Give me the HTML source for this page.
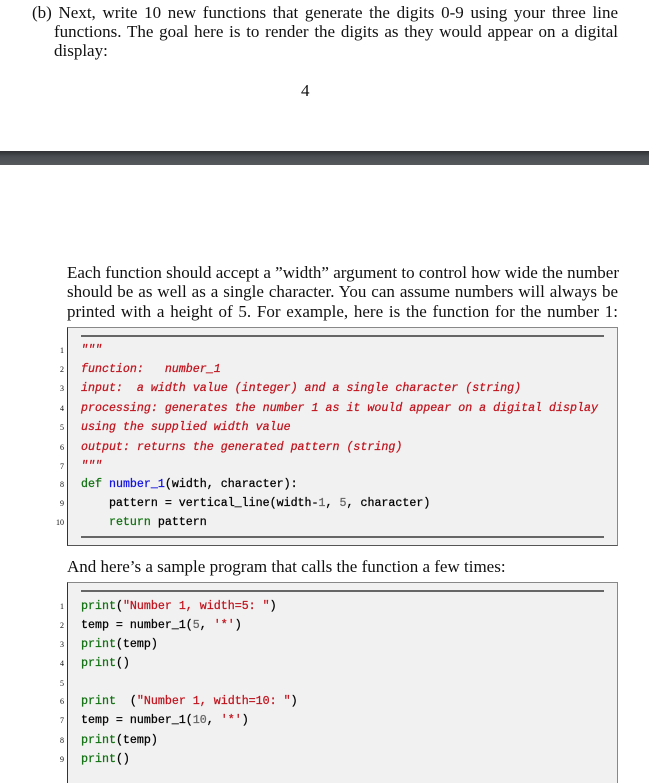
<!DOCTYPE html>
<html><head><meta charset="utf-8"><style>
body{margin:0;width:649px;height:775px;background:#fff;position:relative;overflow:hidden;font-family:"Liberation Serif",serif;color:#111}
.l{position:absolute;font-size:17px;line-height:20px;white-space:nowrap;text-align:justify;text-align-last:justify}
.band{position:absolute;left:0;top:151px;width:649px;height:14px;background:linear-gradient(#2e3033,#4a4e52 40%,#56595c)}
.box{position:absolute;left:67px;width:549px;background:#f1f1f1;border-left:1.5px solid #333;border-top:1px solid #888;border-right:1px solid #888;border-bottom:1.5px solid #555}
.rule{position:absolute;left:81px;width:523px;height:2px;background:#666}
.c{position:absolute;left:81px;font-family:"Liberation Mono",monospace;font-size:11.65px;line-height:14px;white-space:pre;color:#000;-webkit-text-stroke:0.25px currentColor}
.n{position:absolute;left:50px;width:14px;text-align:right;font-size:8px;font-family:"Liberation Serif",serif;line-height:14px}
.cm{color:#c0141e;font-style:italic}
.k{color:#107010}.f{color:#1010e0}.s{color:#c0141e}.g{color:#666}
</style></head><body>
<div class="l" style="left:32px;top:3px;width:586px">(b) Next, write 10 new functions that generate the digits 0-9 using your three line</div>
<div class="l" style="left:54px;top:22px;width:564px">functions. The goal here is to render the digits as they would appear on a digital</div>
<div class="l" style="left:54px;top:41px;text-align-last:left">display:</div>
<div class="l" style="left:301px;top:81px;text-align-last:left">4</div>
<div class="band"></div>
<div class="l" style="left:67px;top:263px;width:551px">Each function should accept a ”width” argument to control how wide the number</div>
<div class="l" style="left:67px;top:282px;width:551px">should be as well as a single character. You can assume numbers will always be</div>
<div class="l" style="left:67px;top:302px;width:551px">printed with a height of 5. For example, here is the function for the number 1:</div>
<div class="box" style="top:327px;height:217px"></div>
<div class="rule" style="top:335px"></div>
<div class="rule" style="top:536px"></div>
<div class="n" style="top:344px">1</div><div class="c cm" style="top:344px">"""</div>
<div class="n" style="top:363px">2</div><div class="c cm" style="top:363px">function:   number_1</div>
<div class="n" style="top:382px">3</div><div class="c cm" style="top:382px">input:  a width value (integer) and a single character (string)</div>
<div class="n" style="top:402px">4</div><div class="c cm" style="top:402px">processing: generates the number 1 as it would appear on a digital display</div>
<div class="n" style="top:421px">5</div><div class="c cm" style="top:421px">using the supplied width value</div>
<div class="n" style="top:441px">6</div><div class="c cm" style="top:441px">output: returns the generated pattern (string)</div>
<div class="n" style="top:460px">7</div><div class="c cm" style="top:460px">"""</div>
<div class="n" style="top:478px">8</div><div class="c" style="top:478px"><span class="k">def</span> <span class="f">number_1</span>(width, character):</div>
<div class="n" style="top:497px">9</div><div class="c" style="top:497px">    pattern = vertical_line(width-<span class="g">1</span>, <span class="g">5</span>, character)</div>
<div class="n" style="top:516px">10</div><div class="c" style="top:516px">    <span class="k">return</span> pattern</div>
<div class="l" style="left:67px;top:557px;text-align-last:left">And here’s a sample program that calls the function a few times:</div>
<div class="box" style="top:582px;height:200px;border-bottom:none"></div>
<div class="rule" style="top:590px"></div>
<div class="n" style="top:600px">1</div><div class="c" style="top:600px"><span class="k">print</span>(<span class="s">"Number 1, width=5: "</span>)</div>
<div class="n" style="top:619px">2</div><div class="c" style="top:619px">temp = number_1(<span class="g">5</span>, <span class="s">'*'</span>)</div>
<div class="n" style="top:638px">3</div><div class="c" style="top:638px"><span class="k">print</span>(temp)</div>
<div class="n" style="top:657px">4</div><div class="c" style="top:657px"><span class="k">print</span>()</div>
<div class="n" style="top:677px">5</div>
<div class="n" style="top:695px">6</div><div class="c" style="top:695px"><span class="k">print</span>  (<span class="s">"Number 1, width=10: "</span>)</div>
<div class="n" style="top:714px">7</div><div class="c" style="top:714px">temp = number_1(<span class="g">10</span>, <span class="s">'*'</span>)</div>
<div class="n" style="top:734px">8</div><div class="c" style="top:734px"><span class="k">print</span>(temp)</div>
<div class="n" style="top:753px">9</div><div class="c" style="top:753px"><span class="k">print</span>()</div>
</body></html>
